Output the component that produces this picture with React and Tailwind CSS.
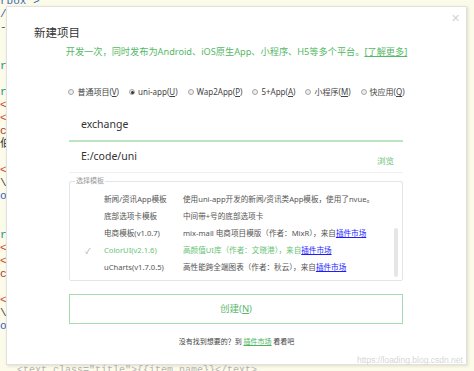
import { useState } from "react";

const codeLines = [
  ["rbox >", "text-[#3a6db4]"],
  ["/", "text-[#3a6db4]"],
  ["-{", "text-[#555]"],
  ["", ""],
  ["", ""],
  ["r[", "text-[#2a8f8a]"],
  ["", ""],
  ["r[", "text-[#2a8f8a]"],
  ["<=", "text-[#c8462e]"],
  ["<=", "text-[#c8462e]"],
  ["c]", "text-[#a63a2a]"],
  ["伯", "text-[#333]"],
  ["", ""],
  ["<=", "text-[#c8462e]"],
  ["\\", "text-[#444]"],
  ["o>", "text-[#3a5fc0]"],
  ["", ""],
  ["", ""],
  ["r[", "text-[#2a8f8a]"],
  ["<=", "text-[#c8462e]"],
  ["<=", "text-[#c8462e]"],
  ["c]", "text-[#a63a2a]"],
  ["", ""],
  ["<=", "text-[#c8462e]"],
  ["\\", "text-[#444]"],
  ["o>", "text-[#3a5fc0]"],
  ["", ""],
  ["", ""],
];

const types = [
  { label: "普通项目", key: "V" },
  { label: "uni-app", key: "U" },
  { label: "Wap2App", key: "P" },
  { label: "5+App", key: "A" },
  { label: "小程序", key: "M" },
  { label: "快应用", key: "Q" },
];

const templates = [
  { name: "新闻/资讯App模板", desc: "使用uni-app开发的新闻/资讯类App模板，使用了nvue。" },
  { name: "底部选项卡模板", desc: "中间带+号的底部选项卡" },
  { name: "电商模板(v1.0.7)", desc: "mix-mall 电商项目模版（作者：MixR），来自", link: true },
  { name: "ColorUI(v2.1.6)", desc: "高颜值UI库（作者：文晓港），来自", link: true, active: true },
  { name: "uCharts(v1.7.0.5)", desc: "高性能跨全端图表（作者：秋云），来自", link: true },
];

const App = () => {
  const [type, setType] = useState("U")

  return (
    <div className="relative w-[474px] h-[371px] overflow-hidden bg-[#fcfae9]">
      {/* editor behind the dialog */}
      <div className="-mt-[5px] font-['Liberation_Mono','Noto_Sans_CJK_SC',monospace] text-[11px] leading-[13px] whitespace-pre">
        {codeLines.map(([t, c], i) => (
          <div key={i} className={`h-[13px] ${c}`}>{t}</div>
        ))}
        <div className="mt-[5px] pl-[17px] text-[#b5b5b5] text-[10px]">{"<text class=\"title\">{{item.name}}</text>"}</div>
      </div>

      {/* dialog */}
      <div className="absolute left-[6px] top-[6px] w-[461px] h-[359px] bg-white border border-[#e2e2dc] shadow-[1px_1px_3px_rgba(0,0,0,0.12)] font-['Noto_Sans','Noto_Sans_CJK_SC',sans-serif]">
        <span className="absolute right-[6px] top-[5px] text-[#d4d4d4] text-[11px] leading-[12px]">✕</span>

        <div className="pt-[18px] pl-[27px] text-[11.5px] leading-[16px] text-[#333]">新建项目</div>

        <div className="mt-[5px] text-center text-[9.2px] leading-[12px] text-[#55b866]">
          开发一次，同时发布为Android、iOS原生App、小程序、H5等多个平台。<span className="underline">[了解更多]</span>
        </div>

        <div className="mt-[28px] flex justify-center gap-[10px] text-[8px] leading-[12px] text-[#444]">
          {types.map((t) => (
            <label key={t.key} className="flex items-center gap-[3px]" onClick={() => setType(t.key)}>
              <span className="w-[6px] h-[6px] rounded-full border border-[#a5a5a5] bg-[#eeeeee] flex items-center justify-center">
                {type === t.key && <span className="w-[3px] h-[3px] rounded-full bg-[#333]"></span>}
              </span>
              <span>
                {t.label}(<span className="underline">{t.key}</span>)
              </span>
            </label>
          ))}
        </div>

        <div className="ml-[62px] w-[334px]">
          <div className="h-[44px] pt-[19px] pl-[12px] border-b-2 border-[#b9e6c1] text-[10.5px] leading-[14px] text-[#333]">
            exchange
          </div>
          <div className="h-[31px] flex justify-between border-b border-[#efefef]">
            <span className="pt-[7px] pl-[12px] text-[10.5px] leading-[14px] text-[#333]">E:/code/uni</span>
            <span className="pt-[14px] pr-[9px] text-[8.5px] leading-[10px] text-[#6cc07c]">浏览</span>
          </div>

          <div className="relative mt-[8px] h-[100px] border border-[#e4e4e4] rounded-[2px] pt-[9px]">
            <span className="absolute left-[5px] -top-[6px] bg-white px-[1px] text-[7px] leading-[10px] text-[#999]">选择模板</span>
            {templates.map((r) => (
              <div key={r.name} className={`h-[17px] flex items-center text-[7.6px] ${r.active ? "text-[#68c278]" : "text-[#555]"}`}>
                <span className="w-[34px] pl-[15px] text-[#a8a8a8] text-[8px]">{r.active ? "✓" : ""}</span>
                <span className="w-[79px]">{r.name}</span>
                <span>
                  {r.desc}
                  {r.link && <span className="text-[#1d1dff] underline">插件市场</span>}
                </span>
              </div>
            ))}
            <div className="absolute right-[4px] top-[46px] w-[4px] h-[49px] rounded-[2px] bg-[#e6e6e6]"></div>
          </div>

          <button className="mt-[13px] w-full h-[30px] border border-[#a6dcb0] text-[9.5px] text-[#5cb86c] flex items-center justify-center">
            创建(<span className="underline">N</span>)
          </button>
        </div>

        <div className="mt-[13px] text-center text-[7px] leading-[10px] text-[#444]">
          没有找到想要的？到 <span className="text-[#4cb462] underline">插件市场</span> 看看吧
        </div>
      </div>

      <span className="absolute left-[357px] top-[354px] font-['Liberation_Sans',sans-serif] text-[8.5px] leading-[12px] text-[#d6d6d6]">
        https://loading.blog.csdn.net
      </span>
    </div>
  );
};

export default App;
